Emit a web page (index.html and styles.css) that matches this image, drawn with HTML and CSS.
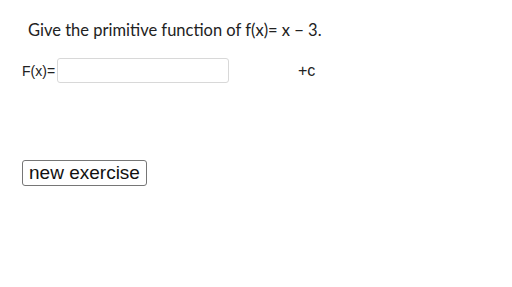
FILE: index.html
```html
<!DOCTYPE html>
<html>
<head>
<meta charset="utf-8">
<link rel="stylesheet" href="styles.css">
</head>
<body>
<div class="page">
  <p class="question">Give the primitive function of f(x)= x − 3.</p>
  <div class="answer-row">
    <span class="label">F(x)=</span>
    <input class="answer" type="text">
    <span class="plus-c">+c</span>
  </div>
  <button class="new-btn">new exercise</button>
</div>
</body>
</html>
```
FILE: styles.css
```css
html, body {
  margin: 0;
  padding: 0;
  background: #fff;
}
.page {
  padding: 19px 0 0 22px;
  display: flex;
  flex-direction: column;
  align-items: flex-start;
}
.question {
  margin: 0 0 0 6px;
  font-family: Lato, sans-serif;
  font-size: 16.5px;
  line-height: 22px;
  color: #222;
}
.answer-row {
  margin-top: 17px;
  display: flex;
  align-items: center;
  height: 25px;
}
.label {
  width: 35px;
  font-family: "Liberation Sans", sans-serif;
  font-size: 14px;
  color: #222;
}
.answer {
  box-sizing: border-box;
  width: 172px;
  height: 25px;
  margin: 0;
  border: 1px solid #d8d8d8;
  border-radius: 3px;
  padding: 0 4px;
  font-size: 14px;
}
.plus-c {
  margin-left: 69px;
  font-family: "Liberation Sans", sans-serif;
  font-weight: 300;
  font-size: 16px;
  color: #222;
}
.new-btn {
  margin-top: 77px;
  box-sizing: border-box;
  width: 125px;
  height: 26px;
  padding: 0;
  background: #fff;
  border: 1px solid #767676;
  border-radius: 3px;
  font-family: "Liberation Sans", sans-serif;
  font-size: 19px;
  color: #111;
}
```
